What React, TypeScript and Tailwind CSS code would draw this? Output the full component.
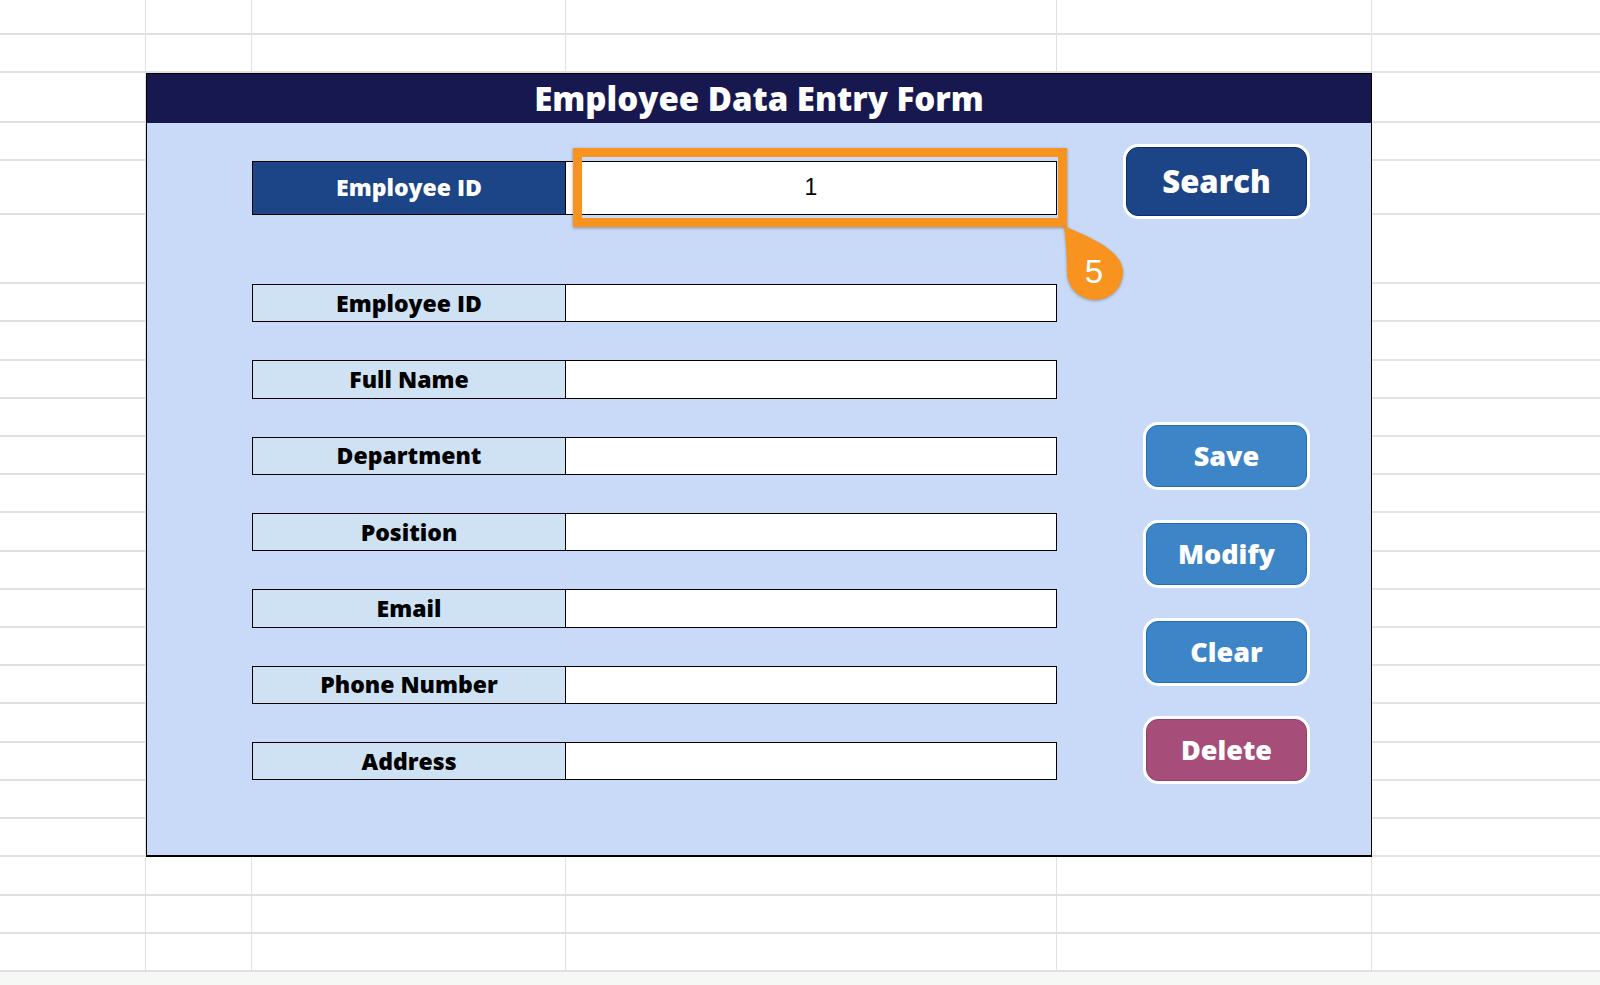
import React from "react";

const ROW_HEIGHTS = [35, 37.7, 50, 38, 54.3, 69, 38.3, ...Array(17).fill(38.22)];
const COLS = 6;
// panel occupies cols 2-5 (index 1..4), rows 3-21 (index 2..20)
const inPanel = (r: number, c: number) => c >= 1 && c <= 4 && r >= 2 && r <= 20;

const FIELDS = ["Employee ID", "Full Name", "Department", "Position", "Email", "Phone Number", "Address"];

function SheetButton({ label, color, edge, w, h, text }: { label: string; color: string; edge: string; w: string; h: string; text: string }) {
  return (
    <div className={`${w} ${h} rounded-[15px] bg-white p-[3px] shrink-0`}>
      <div className={`h-full w-full rounded-[12px] border ${color} ${edge} flex items-center justify-center`}>
        <span className={`${text} font-extrabold text-white leading-none`} style={{ fontFamily: '"Open Sans", sans-serif' }}>
          {label}
        </span>
      </div>
    </div>
  );
}

export default function App() {
  const cells: React.ReactNode[] = [];
  ROW_HEIGHTS.forEach((_, r) => {
    for (let c = 0; c < COLS; c++) {
      if (inPanel(r, c)) continue;
      cells.push(
        <div
          key={`${r}-${c}`}
          className={c === COLS - 1 ? "border-b-2 border-[#e3e3e3] bg-white" : "border-b-2 border-r border-[#e0e0e0] bg-white"}
        />
      );
    }
  });

  return (
    <div
      className="w-[1600px] h-[985px] overflow-hidden bg-white grid"
      style={{
        gridTemplateColumns: "146px 106px 314px 491px 315px 1fr",
        gridTemplateRows: [...ROW_HEIGHTS.map((h) => `${h}px`), "1fr"].join(" "),
        fontFamily: '"Open Sans", sans-serif',
      }}
    >
      <div className="col-start-2 col-span-4 row-start-3 row-span-19 border border-black border-b-2 flex flex-col bg-[#c9daf8] min-h-0">
        <div className="h-[49px] shrink-0 bg-[#181850] flex items-center justify-center">
          <span className="text-[33px] font-extrabold text-white leading-none">Employee Data Entry Form</span>
        </div>
        <div className="flex flex-1 min-h-0">
          <div className="w-[910px] pl-[105px] flex flex-col">
            <div className="mt-[38px] h-[54.3px] flex">
              <div className="w-[314px] h-full border border-black bg-[#1c4587] flex items-center justify-center">
                <span className="text-[23px] font-extrabold text-white leading-none">Employee ID</span>
              </div>
              <div className="relative w-[491px] h-full border border-l-0 border-black bg-white flex items-center justify-center">
                <span className="text-[23px] text-black leading-none" style={{ fontFamily: '"Liberation Sans", Arial, sans-serif' }}>
                  1
                </span>
                <div className="absolute left-[7px] top-[-14px] w-[494px] h-[79px] border-[9px] border-[#f7931e] shadow-[0_1px_3px_rgba(0,0,0,0.35)]" />
                <svg className="absolute left-[497px] top-[64px] overflow-visible" width="62" height="76" viewBox="0 0 62 76">
                  <path
                    d="M1 0 C 24 10, 60 24, 60 46 A 28 28 0 0 1 4 46 C 4 30, 3 14, 1 0 Z"
                    fill="#f7931e"
                    style={{ filter: "drop-shadow(0 1px 1.5px rgba(0,0,0,0.3))" }}
                  />
                  <text x="31" y="57" fontSize="33" fill="#ffffff" textAnchor="middle" fontFamily='"Liberation Sans", Arial, sans-serif'>
                    5
                  </text>
                </svg>
              </div>
            </div>
            <div className="mt-[69px] flex flex-col gap-[38.2px]">
              {FIELDS.map((f) => (
                <div key={f} className="h-[38.2px] flex">
                  <div className="w-[314px] h-full border border-black bg-[#cfe2f3] flex items-center justify-center">
                    <span className="text-[23px] font-extrabold text-black leading-none">{f}</span>
                  </div>
                  <div className="w-[491px] h-full border border-l-0 border-black bg-white" />
                </div>
              ))}
            </div>
          </div>
          <div className="flex-1 flex flex-col items-end pr-[61px] pt-[21px]">
            <SheetButton label="Search" color="bg-[#1c4587]" edge="border-[#0b2f6e]" w="w-[187px]" h="h-[75px]" text="text-[31px]" />
            <div className="mt-[203px] flex flex-col gap-[30px]">
              <SheetButton label="Save" color="bg-[#3d85c6]" edge="border-[#1f6fb8]" w="w-[167px]" h="h-[68px]" text="text-[27px]" />
              <SheetButton label="Modify" color="bg-[#3d85c6]" edge="border-[#1f6fb8]" w="w-[167px]" h="h-[68px]" text="text-[27px]" />
              <SheetButton label="Clear" color="bg-[#3d85c6]" edge="border-[#1f6fb8]" w="w-[167px]" h="h-[68px]" text="text-[27px]" />
              <SheetButton label="Delete" color="bg-[#a64d79]" edge="border-[#94406a]" w="w-[167px]" h="h-[68px]" text="text-[27px]" />
            </div>
          </div>
        </div>
      </div>
      {cells}
      <div className="col-[1/-1] bg-[#f6f8f6]" />
    </div>
  );
}
